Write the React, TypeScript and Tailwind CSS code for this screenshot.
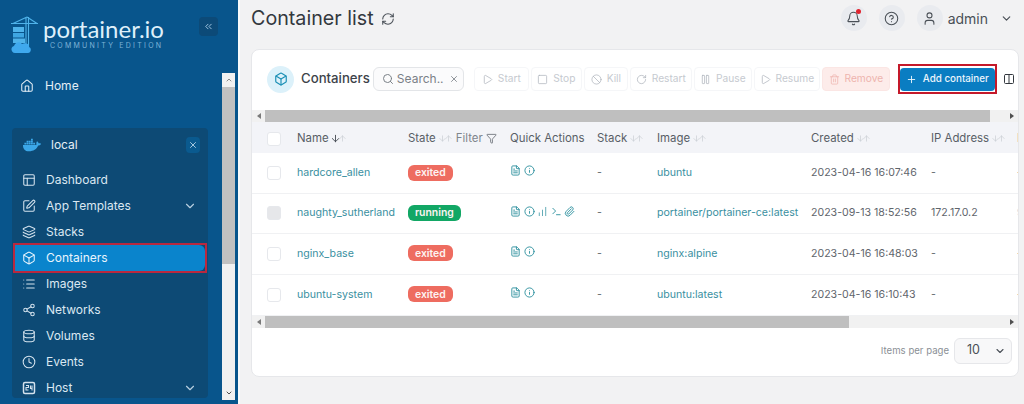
import React from "react";
import { Home, PanelsTopLeft, SquarePen, Layers, Box, List, Share2, Database, Clock, ChevronDown, X, ChevronsLeft, RefreshCw, Search, Play, Square, Ban, RotateCw, Columns2, Trash2, Plus, Bell, CircleHelp, User, FileText, Info, Terminal, Paperclip, Filter, ArrowDown, ArrowUp, ChartNoAxesColumnIncreasing, Pause, ChevronUp } from "lucide-react";
import { FaDocker } from "react-icons/fa";

const font = { fontFamily: "Inter, 'Liberation Sans', sans-serif" };

function Logo() {
  return (
    <svg width="28" height="38" viewBox="0 0 28 38" className="shrink-0">
      <g stroke="#4fb3ea" strokeWidth="1.1" fill="none">
        <path d="M0 7.5 L27 7.5 M15 1 L15 30 M17.5 1 L17.5 30 M16 1 L2 7.5 M16 1 L26 7.5" />
      </g>
      <rect x="2" y="11" width="11" height="5" fill="#4fb3ea" />
      <rect x="2" y="17" width="11" height="4.5" fill="#3ea6e2" />
      <rect x="2" y="22.5" width="12" height="4.5" fill="#4fb3ea" />
      <path d="M4 37 C0 37 -1 31 3 30 C4 26 9 25 11 28 C14 26 19 28 18 31 C21 32 20 37 17 37 Z" fill="#3fa9ee" />
    </svg>
  );
}

function HostIcon({ size = 14, className = "" }: { size?: number; strokeWidth?: number; className?: string }) {
  return (
    <svg width={size} height={size} viewBox="0 0 14 14" fill="none" className={className}>
      <rect x="1.5" y="1.5" width="11" height="11" rx="1.5" stroke="currentColor" strokeWidth="1.5" />
      <path d="M4 4.5h2.5v2H4v2.5h2.5M8.5 4.5v3h1.5M10 4.5v5" stroke="currentColor" strokeWidth="1.1" />
    </svg>
  );
}

function NavRow({ icon: I, label, chevron, active }: { icon: any; label: string; chevron?: boolean; active?: boolean }) {
  if (active) {
    return (
      <div className="mx-[3px] h-[26px] outline-2 outline-[#b9283f]">
        <div className="flex h-full items-center rounded-r-md bg-[#0a84cc] pl-[7px] text-[#e8f5fd]">
          <I size={14} strokeWidth={1.8} className="shrink-0" />
          <span className="ml-[10px] text-[12px] leading-none">{label}</span>
        </div>
      </div>
    );
  }
  return (
    <div className="flex h-[26px] items-center pl-[10px] pr-[11px] text-[#dbe8f2]">
      <I size={14} strokeWidth={1.8} className="shrink-0 text-[#d5e3ee]" />
      <span className="ml-[10px] text-[12px] leading-none">{label}</span>
      {chevron && <ChevronDown size={14} className="ml-auto text-[#b7cfe0]" />}
    </div>
  );
}

function Sidebar() {
  return (
    <div className="relative flex h-full w-[238px] shrink-0 flex-col bg-[#08558c]">
      <div className="flex h-[73px] shrink-0 items-start pl-[11px] pr-[20px] pt-[16px]">
        <Logo />
        <div className="ml-[4px] flex flex-1 flex-col">
          <span className="text-[24px] leading-[25px] text-[#dff0fa]" style={{ fontFamily: "Lato, sans-serif" }}>portainer.io</span>
          <span className="ml-[7px] text-[7px] leading-[9px] tracking-[2.25px] text-[#7fb4d8]">COMMUNITY EDITION</span>
        </div>
        <button className="mt-[1px] flex h-[19px] w-[19px] items-center justify-center rounded-sm bg-[#0c4a78] text-[#a9cce6]">
          <ChevronsLeft size={11} />
        </button>
      </div>
      <div className="flex min-h-0 flex-1">
        <div className="flex w-[222px] flex-col">
          <div className="flex h-[26px] items-center pl-[20px] text-[#e5eff6]">
            <Home size={14} strokeWidth={1.8} />
            <span className="ml-[11px] text-[12px] leading-none">Home</span>
          </div>
          <div className="ml-[12px] mt-[29px] h-[270px] w-[196px] overflow-hidden rounded-sm bg-[#0d4a75]">
            <div className="flex h-[39px] items-center pb-[5px] pl-[11px] pr-[8px]">
              <FaDocker size={18} className="text-[#3ba7e8]" />
              <span className="ml-[10px] text-[12px] leading-none text-[#e5eff6]">local</span>
              <span className="ml-auto flex h-[16px] w-[14px] items-center justify-center rounded-sm bg-[#0a5a8f] text-[#c5deef]"><X size={10} /></span>
            </div>
            <NavRow icon={PanelsTopLeft} label="Dashboard" />
            <NavRow icon={SquarePen} label="App Templates" chevron />
            <NavRow icon={Layers} label="Stacks" />
            <NavRow icon={Box} label="Containers" active />
            <NavRow icon={List} label="Images" />
            <NavRow icon={Share2} label="Networks" />
            <NavRow icon={Database} label="Volumes" />
            <NavRow icon={Clock} label="Events" />
            <NavRow icon={HostIcon} label="Host" chevron />
          </div>
        </div>
        <div className="mb-[4px] flex w-[13px] flex-col bg-[#f1f1f1]">
          <div className="flex h-[14px] items-center justify-center"><ChevronUp size={8} strokeWidth={3} className="text-[#8a8a8a]" /></div>
          <div className="h-[177px] bg-[#c1c1c1]" />
          <div className="mt-auto flex h-[14px] items-center justify-center"><ChevronDown size={8} strokeWidth={3} className="text-[#505050]" /></div>
        </div>
      </div>
    </div>
  );
}

function ActionBtn({ icon: I, label, w, red }: { icon: any; label: string; w: string; red?: boolean }) {
  return (
    <div className={`flex h-[24px] shrink-0 items-center justify-center gap-[5px] rounded-sm border text-[10.2px] ${w} ${red ? "border-[#fbe6e4] bg-[#fdecea] text-[#eeb4ae]" : "border-[#f5f6f8] bg-white text-[#c6cad0]"}`}>
      <I size={11} strokeWidth={1.6} className={red ? "text-[#eeb4ae]" : "text-[#aeb4bc]"} />
      <span>{label}</span>
    </div>
  );
}

function ScrollBar({ thumb }: { thumb: string }) {
  return (
    <div className="flex h-[12px] shrink-0 bg-[#f1f1f1]">
      <div className="flex w-[13px] items-center justify-center"><span className="border-y-[3px] border-r-[4px] border-y-transparent border-r-[#7a7a7a]" /></div>
      <div className={`h-full bg-[#bfbfbf] ${thumb}`} />
      <div className="ml-auto flex w-[13px] items-center justify-center"><span className="border-y-[3px] border-l-[4px] border-y-transparent border-l-[#505050]" /></div>
    </div>
  );
}

function SortHead({ label, filter }: { label: string; filter?: boolean }) {
  return (
    <div className="flex items-center whitespace-nowrap">
      <span>{label}</span>
      <ArrowDown size={9} className="ml-[2px] text-[#ccd0d6]" />
      <ArrowUp size={9} className="-ml-[3px] text-[#ccd0d6]" />
      {filter && <><span className="ml-[3px] text-[#7f858c]">Filter</span><Filter size={11} strokeWidth={1.6} className="ml-[3px] text-[#555b63]" /></>}
    </div>
  );
}

const rows = [
  { name: "hardcore_allen", state: "exited", image: "ubuntu", created: "2023-04-16 16:07:46", ip: "-", h: "h-[40px]" },
  { name: "naughty_sutherland", state: "running", image: "portainer/portainer-ce:latest", created: "2023-09-13 18:52:56", ip: "172.17.0.2", h: "h-[40px]", checked: true },
  { name: "nginx_base", state: "exited", image: "nginx:alpine", created: "2023-04-16 16:48:03", ip: "-", h: "h-[41px]" },
  { name: "ubuntu-system", state: "exited", image: "ubuntu:latest", created: "2023-04-16 16:10:43", ip: "-", h: "h-[41px]" },
];

function Table() {
  const I = "text-[#2c8f9e] shrink-0";
  return (
    <table className="w-[800px] table-fixed border-collapse text-[11.4px] text-[#5f656c]">
      <colgroup>
        <col className="w-[45px]" /><col className="w-[111px]" /><col className="w-[102px]" /><col className="w-[87px]" />
        <col className="w-[60px]" /><col className="w-[154px]" /><col className="w-[120px]" /><col className="w-[86px]" /><col className="w-[35px]" />
      </colgroup>
      <thead>
        <tr className="h-[31px] bg-[#f3f4f8] text-left text-[#585e66] [&>th]:pt-[2px]">
          <th className="pl-[15px] font-normal"><span className="block h-[14px] w-[14px] rounded-[3px] border border-[#e6e8ec] bg-white" /></th>
          <th className="font-normal"><div className="flex items-center"><span>Name</span><ArrowDown size={11} className="ml-[1px] text-[#444a52]" /><ArrowUp size={9} className="-ml-[3px] text-[#ccd0d6]" /></div></th>
          <th className="font-normal"><SortHead label="State" filter /></th>
          <th className="font-normal whitespace-nowrap">Quick Actions</th>
          <th className="font-normal"><SortHead label="Stack" /></th>
          <th className="font-normal"><SortHead label="Image" /></th>
          <th className="font-normal"><SortHead label="Created" /></th>
          <th className="font-normal"><SortHead label="IP Address" /></th>
          <th className="font-normal">P</th>
        </tr>
      </thead>
      <tbody>
        {rows.map((r) => (
          <tr key={r.name} className={`${r.h} border-b border-[#f0f1f3] text-[10.6px]`}>
            <td className="pl-[15px]"><span className={`block h-[14px] w-[14px] rounded-[3px] border border-[#e6e8ec] ${r.checked ? "bg-[#e6e7ea]" : "bg-white"}`} /></td>
            <td className="whitespace-nowrap text-[#3a8f9f]">{r.name}</td>
            <td>
              <span className={`inline-flex h-[16px] items-center rounded-[6px] px-[7px] text-[10.4px] font-semibold text-[#fdf3f2] ${r.state === "running" ? "bg-[#12a765]" : "bg-[#ee6c60]"}`}>{r.state}</span>
            </td>
            <td>
              <div className="-mt-[4px] flex items-center gap-[2.5px]">
                <FileText size={11} strokeWidth={2} className={I} />
                <Info size={11} strokeWidth={2} className={I} />
                {r.state === "running" && <>
                  <ChartNoAxesColumnIncreasing size={11} strokeWidth={1.6} className={I} />
                  <Terminal size={11} strokeWidth={2} className={I} />
                  <Paperclip size={11} strokeWidth={2} className={I} />
                </>}
              </div>
            </td>
            <td>-</td>
            <td className="whitespace-nowrap text-[#3a8f9f]">{r.image}</td>
            <td className="whitespace-nowrap">{r.created}</td>
            <td className="whitespace-nowrap">{r.ip}</td>
            <td className={r.checked ? "text-[#7fc0d6]" : ""}>{r.checked ? "9" : "-"}</td>
          </tr>
        ))}
      </tbody>
    </table>
  );
}

function Main() {
  return (
    <div className="flex min-w-0 flex-1 flex-col border-l-2 border-[#f8fafb] bg-[#f2f2f3] pl-[11px] pr-[5px]">
      <div className="flex h-[49px] shrink-0 items-start pt-[4px]">
        <span className="text-[19.7px] leading-[28px] text-[#33383e]">Container list</span>
        <RefreshCw size={14} strokeWidth={1.8} className="ml-[7px] mt-[8px] text-[#4a5057]" />
        <div className="ml-auto mr-[6px] mt-[1px] flex items-center">
          <span className="relative flex h-[26px] w-[26px] items-center justify-center rounded-full bg-[#e9ebef] text-[#4a5057]">
            <Bell size={15} strokeWidth={1.7} />
            <span className="absolute right-[6px] top-[4px] h-[5px] w-[5px] rounded-full bg-[#e0232e]" />
          </span>
          <span className="ml-[12px] flex h-[26px] w-[26px] items-center justify-center rounded-full bg-[#e9ebef] text-[#4a5057]"><CircleHelp size={15} strokeWidth={1.7} /></span>
          <span className="ml-[12px] flex h-[26px] w-[26px] items-center justify-center rounded-full bg-[#e9ebef] text-[#4a5057]"><User size={15} strokeWidth={1.7} /></span>
          <span className="ml-[5px] text-[14px] text-[#4a5057]">admin</span>
          <ChevronDown size={13} strokeWidth={2.2} className="ml-[12px] text-[#4a5057]" />
        </div>
      </div>
      <div className="flex h-[328px] flex-col overflow-hidden rounded-lg border border-[#e6e7ea] bg-white">
        <div className="flex h-[60px] shrink-0 items-center pb-[2px] pl-[15px]">
          <span className="flex h-[27px] w-[27px] shrink-0 items-center justify-center rounded-full bg-[#dcf1fa]"><Box size={14} className="text-[#1a8fb5]" /></span>
          <span className="ml-[7px] text-[13.2px] font-medium text-[#3d434a]">Containers</span>
          <div className="ml-[3px] flex h-[24px] w-[91px] shrink-0 items-center rounded-md border border-[#e3e5e8] bg-[#fbfbfc] pl-[8px] text-[#7a8087]">
            <Search size={12} />
            <span className="ml-[3px] text-[12px]">Search..</span>
            <X size={10} className="ml-[5px]" />
          </div>
          <div className="ml-[10px] flex gap-[2px]">
            <ActionBtn icon={Play} label="Start" w="w-[55px]" />
            <ActionBtn icon={Square} label="Stop" w="w-[51px]" />
            <ActionBtn icon={Ban} label="Kill" w="w-[44px]" />
            <ActionBtn icon={RotateCw} label="Restart" w="w-[62px]" />
            <ActionBtn icon={Pause} label="Pause" w="w-[58px]" />
            <ActionBtn icon={Play} label="Resume" w="w-[66px]" />
            <ActionBtn icon={Trash2} label="Remove" w="w-[68px]" red />
          </div>
          <div className="ml-[10px] flex h-[26px] w-[95px] shrink-0 items-center outline-2 outline-[#c4192a]">
            <div className="flex h-[23px] w-full items-center justify-center gap-[6px] rounded-sm bg-[#0a7dc2] text-[9.8px] font-medium text-[#eaf5fc]">
              <Plus size={11} />
              <span>Add container</span>
            </div>
          </div>
          <Columns2 size={12} strokeWidth={2} className="ml-[8px] text-[#33383e]" />
        </div>
        <ScrollBar thumb="w-[725px]" />
        <div className="overflow-hidden"><Table /></div>
        <ScrollBar thumb="w-[584px]" />
        <div className="flex flex-1 items-start justify-end pr-[6px] pt-[10px]">
          <span className="mt-[6px] text-[9.6px] text-[#8b9096]">Items per page</span>
          <div className="ml-[5px] flex h-[26px] w-[58px] items-center rounded-md border border-[#e6e7ea] bg-[#f8f8f9] pl-[12px] pr-[5px] text-[12.5px] text-[#4a5057]">
            <span>10</span>
            <ChevronDown size={12} strokeWidth={2.2} className="ml-auto" />
          </div>
        </div>
      </div>
    </div>
  );
}

export default function App() {
  return (
    <div className="flex h-[404px] w-[1024px] overflow-hidden" style={font}>
      <Sidebar />
      <Main />
    </div>
  );
}
